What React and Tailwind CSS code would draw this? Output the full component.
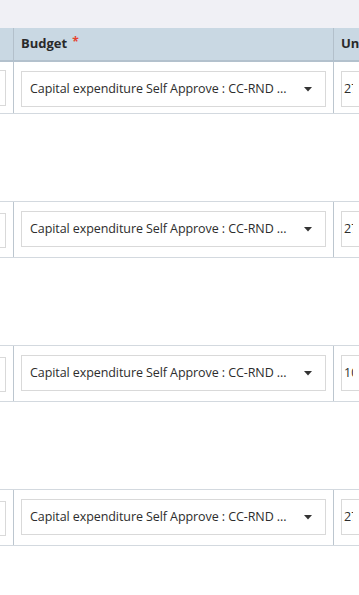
import React from "react";

const font = { fontFamily: '"Open Sans", "Liberation Sans", sans-serif' };

function Caret() {
  return (
    <svg width="8" height="5" viewBox="0 0 8 5" className="shrink-0">
      <path d="M0 0 L8 0 L4 4.5 Z" fill="#333" />
    </svg>
  );
}

function Row({ value, first }) {
  return (
    <div
      className={`flex w-[380px] border-b border-[#d3d9df] ${first ? "h-[52px]" : "h-[57px] border-t"}`}
    >
      <div className={`w-[14px] shrink-0 border-r border-[#bcc6cf] pr-[7px] flex ${first ? "pt-[8px]" : "pt-[11px]"}`}>
        <div className={`w-full border border-[#d9d9d9] border-l-0 ${first ? "h-[36px]" : "h-[35px]"}`} />
      </div>
      <div className="w-[320px] shrink-0 border-r border-[#bcc6cf] px-[7px] pt-[9px]">
        <div className="h-[36px] border border-[#d9d9d9] bg-white flex items-center pl-[8px] pr-[13px] justify-between">
          <span className="text-[12.5px] text-[#2d2d2d] whitespace-nowrap tracking-[-0.08px]">
            Capital expenditure Self Approve : CC-RND ...
          </span>
          <Caret />
        </div>
      </div>
      <div className="flex-1 pl-[7px] pt-[9px] overflow-hidden">
        <div className="h-[36px] border border-[#d9d9d9] flex items-center pl-[2px] text-[12.5px] text-[#2d2d2d]">
          <span className="w-[9px] overflow-hidden whitespace-nowrap">{value}</span>
        </div>
      </div>
    </div>
  );
}

function Spacer() {
  return <div className="h-[87px] bg-white" />;
}

export default function App() {
  return (
    <div className="w-[359px] h-[595px] overflow-hidden bg-white" style={font}>
      <div className="h-[28px] bg-[#f0f0f5]" />
      <div className="flex w-[380px] h-[34px] bg-[#c9d8e3] border-b-2 border-[#b3c1cd]">
        <div className="w-[14px] shrink-0 border-r border-[#b3c0cb]" />
        <div className="w-[320px] shrink-0 border-r border-[#b3c0cb] px-[7px] flex items-center">
          <span className="text-[13px] font-bold text-[#2a2a2a]">Budget</span>
          <span className="text-[12px] font-bold text-[#e5432f] ml-[5px] relative -top-[2px]">*</span>
        </div>
        <div className="flex-1 pl-[7px] flex items-center">
          <span className="text-[13px] font-bold text-[#2a2a2a] whitespace-nowrap">Unit</span>
        </div>
      </div>
      <Row value="27" first />
      <Spacer />
      <Row value="27" />
      <Spacer />
      <Row value="10" />
      <Spacer />
      <Row value="27" />
    </div>
  );
}
